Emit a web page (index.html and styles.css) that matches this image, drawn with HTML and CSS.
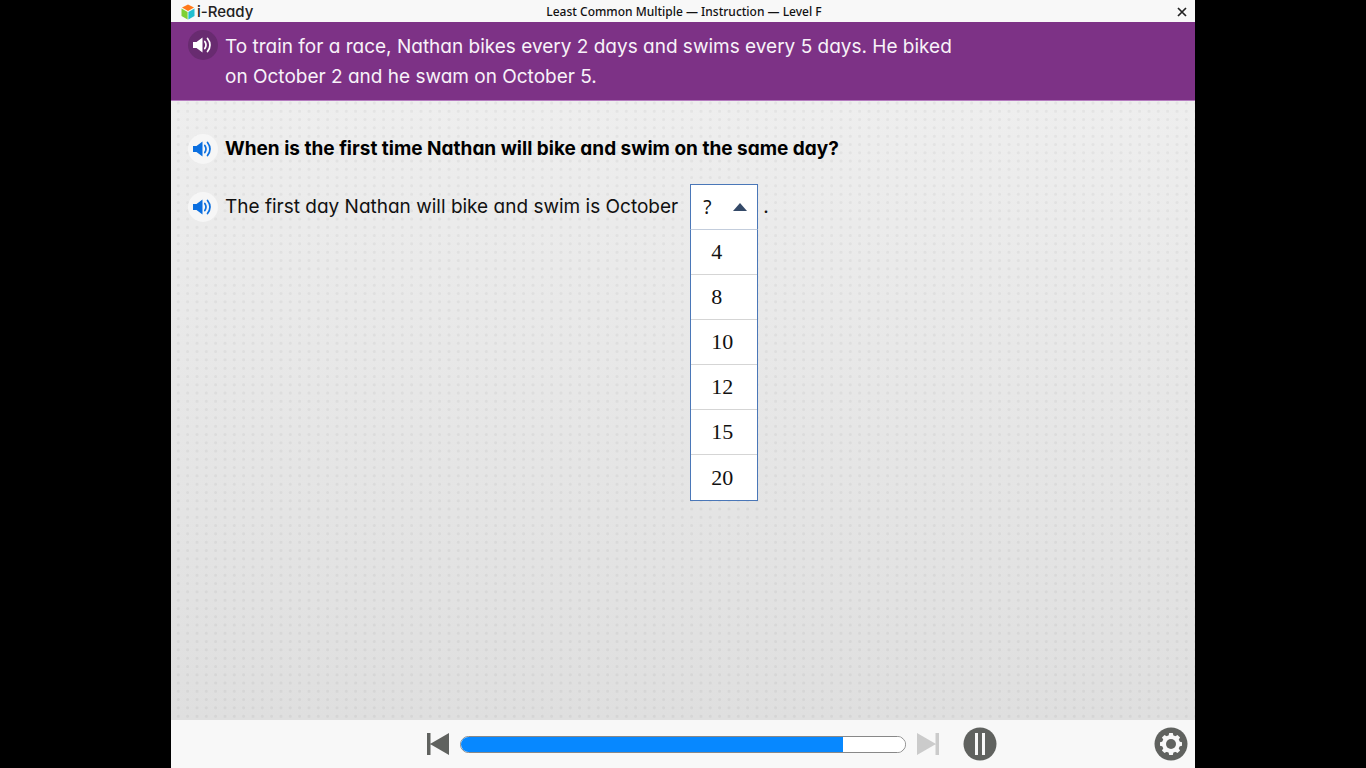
FILE: index.html
```html
<!DOCTYPE html>
<html lang="en">
<head>
<meta charset="utf-8">
<meta name="viewport" content="width=device-width, initial-scale=1">
<title>Least Common Multiple — Instruction — Level F</title>
<link rel="stylesheet" href="styles.css">
</head>
<body>
<svg class="sprite" aria-hidden="true">
  <symbol id="speaker" viewBox="0 0 30 30">
    <path fill="currentColor" d="M5 12h3.500l6-4.500v15l-6-4.500H5z"/>
    <path fill="none" stroke="currentColor" stroke-width="1.700" stroke-linecap="round" d="M16.800 11.500q2.400 3.500 0 7M19.500 8.500q5 6.500 0 13"/>
  </symbol>
</svg>
<div class="app">
  <header class="topbar">
    <div class="logo">
      <svg class="logo-cube" viewBox="0 0 14 16" aria-hidden="true">
        <path fill="#ff7a1a" d="M7 0.500 13 3.500 7 7 1 3.500z"/>
        <path fill="#7ed034" d="M.5 4.500 6.600 8v7.500L.5 12z"/>
        <path fill="#22bfd0" d="M13.500 4.500 7.400 8v7.500l6.100-3.500z"/>
      </svg>
      <span>i-Ready</span>
    </div>
    <h1 class="title">Least Common Multiple — Instruction — Level F</h1>
    <button class="close" type="button" aria-label="Close">
      <svg viewBox="0 0 10 10" aria-hidden="true"><path d="M1 1 9 9M9 1 1 9" stroke="#222" stroke-width="1.700"/></svg>
    </button>
  </header>

  <section class="prompt">
    <button class="audio audio-dark" type="button" aria-label="Read the problem aloud"><svg aria-hidden="true"><use href="#speaker"/></svg></button>
    <p class="text">To train for a race, Nathan bikes every 2 days and swims every 5 days. He biked on October 2 and he swam on October 5.</p>
  </section>

  <main class="work">
    <div class="row">
      <button class="audio" type="button" aria-label="Read the question aloud"><svg aria-hidden="true"><use href="#speaker"/></svg></button>
      <h2 class="text question">When is the first time Nathan will bike and swim on the same day?</h2>
    </div>
    <div class="row">
      <button class="audio" type="button" aria-label="Read the answer sentence aloud"><svg aria-hidden="true"><use href="#speaker"/></svg></button>
      <div class="text answer">
        <span id="answer-label">The first day Nathan will bike and swim is October</span>
        <div class="dropdown">
          <button class="dropdown-toggle" type="button" aria-haspopup="listbox" aria-expanded="true" aria-labelledby="answer-label">
            <span>?</span>
            <svg class="caret" viewBox="0 0 14 8" aria-hidden="true"><path fill="#344968" d="M7 0 14 8H0z"/></svg>
          </button>
          <div class="menu" role="listbox" aria-labelledby="answer-label">
            <button class="option" type="button" role="option">4</button>
            <button class="option" type="button" role="option">8</button>
            <button class="option" type="button" role="option">10</button>
            <button class="option" type="button" role="option">12</button>
            <button class="option" type="button" role="option">15</button>
            <button class="option" type="button" role="option">20</button>
          </div>
        </div>
        <span>.</span>
      </div>
    </div>
  </main>

  <footer class="controls">
    <button class="step" type="button" aria-label="Previous">
      <svg viewBox="0 0 22 22" aria-hidden="true"><path fill="#60625f" d="M0 0h3.500v22H0zM3 11 22 0v22z"/></svg>
    </button>
    <progress class="progress" value="86" max="100" aria-label="Lesson progress"></progress>
    <button class="step" type="button" aria-label="Next" disabled>
      <svg viewBox="0 0 22 22" aria-hidden="true"><path fill="#cbcbcb" d="M18.500 0H22v22h-3.500zM19 11 0 0v22z"/></svg>
    </button>
    <button class="round pause" type="button" aria-label="Pause">
      <svg viewBox="0 0 34 34" aria-hidden="true"><circle cx="17" cy="17" r="16.500" fill="#60625f"/><path fill="#f8f8f8" d="M12 6h3v22h-3zM19 6h3v22h-3z"/></svg>
    </button>
    <button class="round settings" type="button" aria-label="Settings">
      <svg viewBox="0 0 34 34" aria-hidden="true">
        <circle cx="17" cy="17" r="16.500" fill="#60625f"/>
        <g fill="#f8f8f8">
          <circle cx="17" cy="17" r="9"/>
          <path id="teeth" d="M14.500 9 15.200 6h3.600l.7 3v16l-.7 3h-3.600l-.7-3z"/>
          <use href="#teeth" transform="rotate(45 17 17)"/>
          <use href="#teeth" transform="rotate(90 17 17)"/>
          <use href="#teeth" transform="rotate(135 17 17)"/>
        </g>
        <circle cx="17" cy="17" r="5" fill="#60625f"/>
      </svg>
    </button>
  </footer>
</div>
</body>
</html>
```
FILE: styles.css
```css
* {
  box-sizing: border-box;
}

body {
  margin: 0;
  background: #000;
  color: #111;
  font-family: Inter, "Liberation Sans", sans-serif;
}

button {
  padding: 0;
  border: 0;
  background: none;
  color: inherit;
  font: inherit;
  cursor: pointer;
}

svg {
  display: block;
}

.sprite {
  display: none;
}

/* 4:3 stage centred in the window */
.app {
  display: flex;
  flex-direction: column;
  width: min(100vw, calc(100vh * 4 / 3));
  min-height: 100vh;
  margin: 0 auto;
}

.topbar {
  display: grid;
  grid-template-columns: 1fr auto 1fr;
  align-items: center;
  height: 22px;
  padding: 1px 8px 0 10px;
  background: #f8f8f8;
}

.logo {
  display: flex;
  align-items: center;
  gap: 2px;
  color: #222;
  font-size: 15px;
  font-weight: 500;
  line-height: 20px;
  font-feature-settings: "cv11";
}

.logo-cube {
  width: 14px;
  height: 16px;
}

.title {
  margin: 0;
  font: 500 12px/20px "Noto Sans", sans-serif;
}

.close {
  justify-self: end;
}

.close svg {
  width: 10px;
  height: 10px;
}

.prompt {
  display: flex;
  align-items: flex-start;
  gap: 7px;
  padding: 8px 230px 8px 17px;
  border-bottom: 1px solid #b57cc0;
  background: #7d3286;
  color: #f8f2f9;
}

.text {
  margin: 0;
  font-size: 19px;
  font-weight: 400;
  line-height: 30px;
  font-feature-settings: "cv11";
}

.prompt .text {
  padding-top: 2px;
}

.audio {
  flex: none;
  width: 30px;
  height: 30px;
  border-radius: 50%;
  background: #f6f6f6;
  color: #0b6fe0;
}

.audio-dark {
  background: #682b70;
  color: #fff;
}

.audio svg {
  width: 30px;
  height: 30px;
}

.work {
  display: flex;
  flex: 1;
  flex-direction: column;
  gap: 20px;
  padding: 33px 17px;
  background:
    url("data:image/svg+xml,%3Csvg xmlns='http://www.w3.org/2000/svg' width='28' height='58'%3E%3Cpath d='M7.300 2v56M16.600 2v56M26 2v56' stroke='%23000' stroke-opacity='.045' stroke-width='3' stroke-linecap='round' stroke-dasharray='0 8.286'/%3E%3C/svg%3E"),
    linear-gradient(#eee, #dfdfdf);
}

.row {
  display: flex;
  align-items: center;
  gap: 7px;
}

.question {
  color: #000;
  font-weight: 700;
}

.answer {
  display: flex;
  align-items: center;
  gap: 5px;
}

.dropdown {
  position: relative;
  width: 68px;
  margin-left: 7px;
}

.dropdown-toggle {
  display: flex;
  align-items: center;
  justify-content: space-between;
  width: 100%;
  height: 46px;
  padding: 0 10px 0 12px;
  border: 1px solid #4a77b8;
  border-bottom-color: #c3cddc;
  background: #fff;
  font-family: "Noto Sans", sans-serif;
}

.caret {
  width: 14px;
  height: 8px;
}

.menu {
  position: absolute;
  top: 100%;
  left: 0;
  width: 100%;
  border: 1px solid #4a77b8;
  border-top: 0;
  background: #fff;
}

.option {
  display: block;
  width: 100%;
  height: 45px;
  padding: 0 20px;
  border-bottom: 1px solid #d5d5d5;
  font: 22px/44px "Liberation Serif", serif;
  text-align: left;
}

.option:last-child {
  border-bottom: 0;
}

.controls {
  display: flex;
  align-items: center;
  height: 48px;
  padding: 0 7px 0 25%;
  background: #f8f8f8;
}

.step svg {
  width: 22px;
  height: 22px;
}

.progress {
  flex: 0 1 446px;
  min-width: 0;
  height: 17px;
  margin: 0 11px;
  overflow: hidden;
  border: 1px solid #888;
  border-radius: 9px;
  background: #fff;
  appearance: none;
}

.progress::-webkit-progress-bar {
  background: #fff;
}

.progress::-webkit-progress-value {
  background: #0788ff;
}

.round svg {
  width: 34px;
  height: 34px;
}

.pause {
  margin-left: 24px;
}

.settings {
  margin-left: auto;
}
```
